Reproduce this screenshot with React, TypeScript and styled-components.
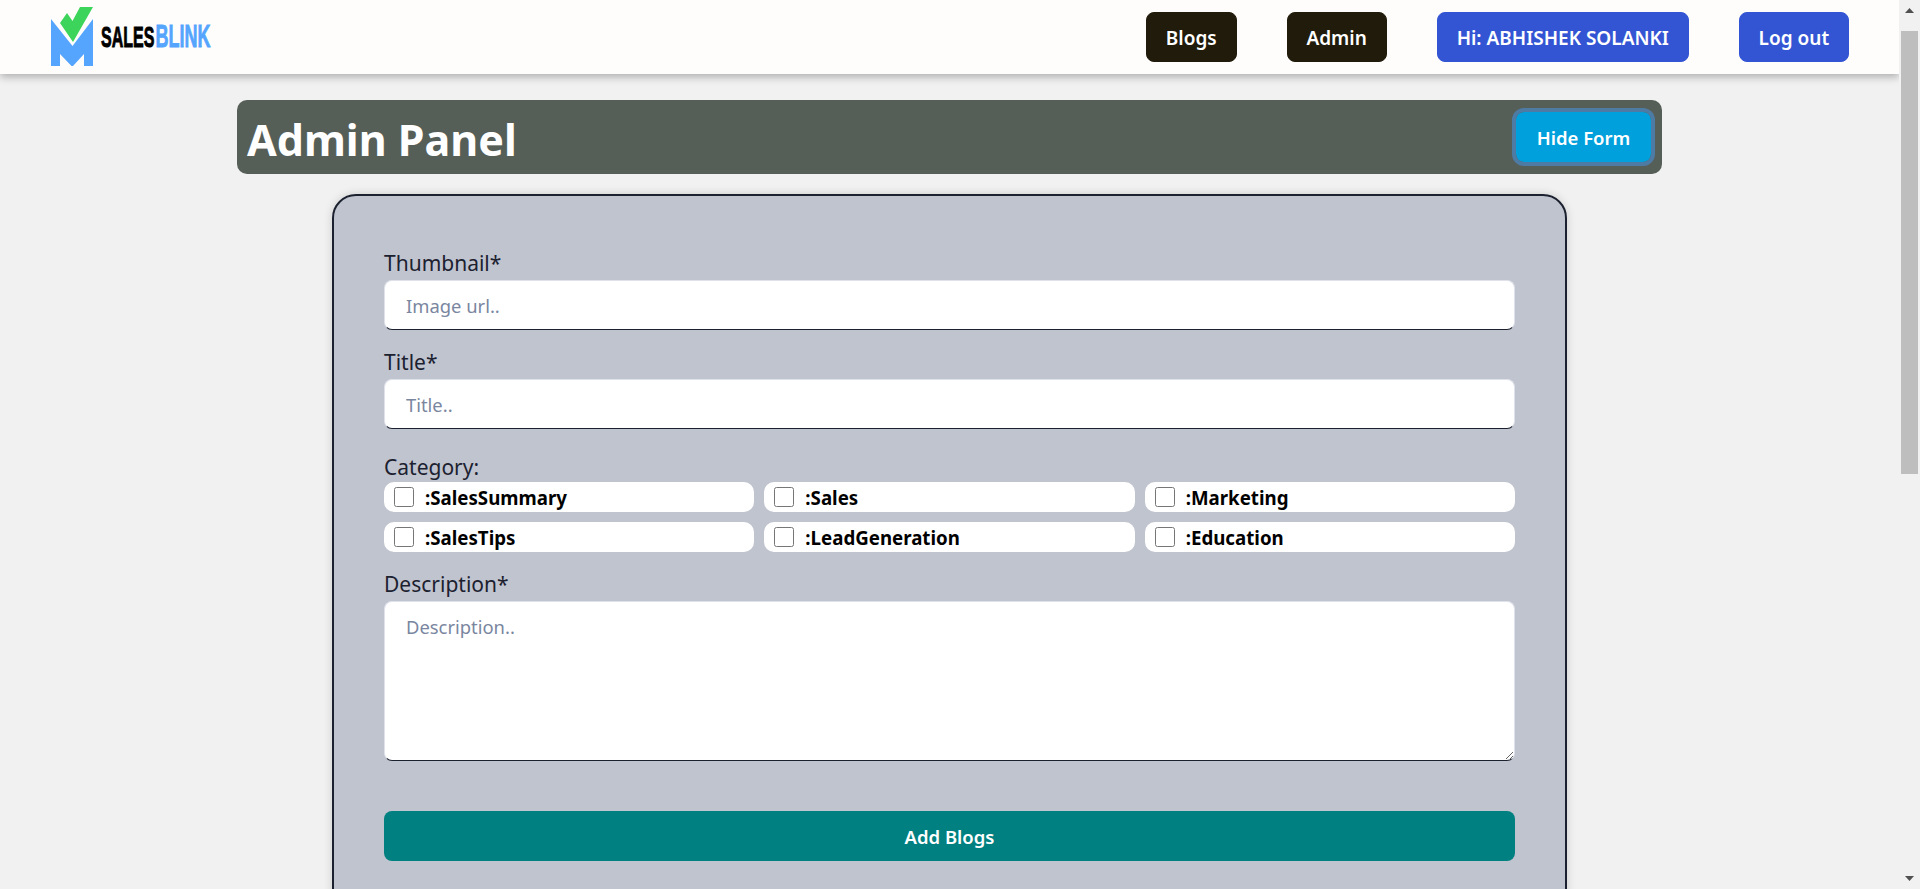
import React from "react";
import styled, { createGlobalStyle } from "styled-components";

const GlobalStyle = createGlobalStyle`
  * {
    box-sizing: border-box;
  }
  body {
    margin: 0;
    background: #f1f1f1;
    font-family: "Noto Sans", "Open Sans", sans-serif;
    color: #1c2130;
  }
`;

const Shell = styled.div`
  display: flex;
  height: 100vh;
  overflow: hidden;
`;

const Page = styled.div`
  flex: 1;
  min-width: 0;
  overflow: hidden;
`;

const ScrollRail = styled.div`
  display: flex;
  flex-direction: column;
  align-items: center;
  width: 21px;
  background: #f1f1f1;
`;

const RailArrow = styled.div`
  display: flex;
  align-items: center;
  justify-content: center;
  width: 100%;
  height: 21px;
`;

const RailThumb = styled.div`
  width: 17px;
  height: 443px;
  margin-top: 10px;
  background: #bebebe;
`;

const RailSpacer = styled.div`
  flex: 1;
`;

const Header = styled.header`
  position: relative;
  display: flex;
  align-items: center;
  justify-content: space-between;
  height: 74px;
  padding: 0 50px 0 51px;
  background: #fffdfb;
  box-shadow: 0 3px 8px rgba(0, 0, 0, 0.28);
`;

const Nav = styled.nav`
  display: flex;
  gap: 50px;
`;

const NavButton = styled.button<{ $blue?: boolean }>`
  height: 50px;
  padding: 1px 18.9px 0;
  border: 1px solid ${(props) => (props.$blue ? "#3355d4" : "#211b0b")};
  border-radius: 8px;
  background: ${(props) => (props.$blue ? "#3355d4" : "#211b0b")};
  color: #fff;
  font-family: inherit;
  font-size: 19px;
  font-weight: 600;
`;

const Main = styled.main`
  display: flex;
  flex-direction: column;
  align-items: center;
  padding-top: 26px;
`;

const TitleBar = styled.div`
  display: flex;
  align-items: center;
  justify-content: space-between;
  width: 1425px;
  height: 74px;
  padding: 0 11px 0 10px;
  border-radius: 10px;
  background: #565e58;
`;

const Title = styled.h1`
  margin: 4px 0 0;
  color: #fff;
  font-size: 43px;
  font-weight: 700;
`;

const HideButton = styled.button`
  width: 135px;
  height: 50px;
  padding: 1px 0 0;
  border: none;
  border-radius: 8px;
  outline: 4px solid #4d7ba3;
  background: #00a0dc;
  color: #fff;
  font-family: inherit;
  font-size: 18.5px;
  font-weight: 600;
`;

const FormCard = styled.form`
  display: flex;
  flex-direction: column;
  width: 1235px;
  min-height: 1000px;
  margin-top: 20px;
  padding: 52px 50px 50px;
  border: 2px solid #1c2130;
  border-radius: 24px;
  background: #c0c4cf;
  box-shadow: 0 0 10px rgba(0, 0, 0, 0.15);
`;

const Field = styled.div<{ $gap?: number }>`
  display: flex;
  flex-direction: column;
  margin-bottom: ${(props) => props.$gap ?? 0}px;
`;

const Label = styled.label<{ $tight?: boolean }>`
  margin-bottom: ${(props) => (props.$tight ? 0 : 2)}px;
  font-size: 21px;
  line-height: 30px;
`;

const TextInput = styled.input`
  width: 100%;
  height: 50px;
  padding: 0 21px;
  border: 1px solid #dfe2ea;
  border-bottom-color: #1c2130;
  border-radius: 8px;
  background: #fff;
  font-family: inherit;
  font-size: 18.4px;
  &::placeholder {
    color: #7a86a0;
  }
`;

const TextArea = styled.textarea`
  display: block;
  width: 100%;
  height: 160px;
  padding: 12px 21px;
  border: 1px solid #dfe2ea;
  border-bottom-color: #1c2130;
  border-radius: 8px;
  background: #fff;
  font-family: inherit;
  font-size: 18.4px;
  &::placeholder {
    color: #7a86a0;
  }
`;

const CategoryGrid = styled.div`
  display: grid;
  grid-template-columns: repeat(3, 1fr);
  gap: 10px;
`;

const CategoryItem = styled.label`
  display: flex;
  align-items: center;
  gap: 11px;
  height: 30px;
  padding-left: 10px;
  border-radius: 10px;
  background: #fff;
  color: #000;
  font-size: 18.7px;
  font-weight: 700;
`;

const CategoryBox = styled.input`
  width: 20px;
  height: 20px;
  margin: 0;
`;

const SubmitButton = styled.button`
  height: 50px;
  margin-top: 50px;
  padding: 1px 0 0;
  border: none;
  border-radius: 8px;
  background: #008080;
  color: #fff;
  font-family: inherit;
  font-size: 18.5px;
  font-weight: 600;
`;

const categories = [
  "SalesSummary",
  "Sales",
  "Marketing",
  "SalesTips",
  "LeadGeneration",
  "Education",
];

const LogoWord = ({
  x,
  size,
  stretch,
  fill,
  children,
}: {
  x: number;
  size: number;
  stretch: number;
  fill: string;
  children: string;
}) => (
  <text
    transform={`translate(${x} 47) scale(1 ${stretch})`}
    fontFamily="Liberation Sans, sans-serif"
    fontWeight="700"
    fontSize={size}
    fill={fill}
    stroke={fill}
    strokeWidth="0.5"
  >
    {children}
  </text>
);

const Logo = () => (
  <svg width="165" height="62" viewBox="51 6 165 62">
    <polygon
      points="51,19 72.5,46 93,19 93,66 84,66 84,54 73,66 71.5,66 60,54 60,66 51,66"
      fill="#55a5ff"
    />
    <polygon points="60,23 67,13 72.5,21 80,7 93,7 73,42" fill="#3dd45c" />
    <LogoWord x={101} size={16} stretch={1.9} fill="#000">SALES</LogoWord>
    <LogoWord x={155.5} size={18} stretch={1.7} fill="#55a5ff">BLINK</LogoWord>
  </svg>
);

const App: React.FC = () => (
  <Shell>
    <GlobalStyle />
    <Page>
      <Header>
        <Logo />
        <Nav>
          <NavButton>Blogs</NavButton>
          <NavButton>Admin</NavButton>
          <NavButton $blue>Hi: ABHISHEK SOLANKI</NavButton>
          <NavButton $blue>Log out</NavButton>
        </Nav>
      </Header>
      <Main>
        <TitleBar>
          <Title>Admin Panel</Title>
          <HideButton>Hide Form</HideButton>
        </TitleBar>
        <FormCard>
          <Field $gap={17}>
            <Label>Thumbnail*</Label>
            <TextInput placeholder="Image url.." />
          </Field>
          <Field $gap={23}>
            <Label>Title*</Label>
            <TextInput placeholder="Title.." />
          </Field>
          <Field $gap={17}>
            <Label $tight>Category:</Label>
            <CategoryGrid>
              {categories.map((name) => (
                <CategoryItem key={name}>
                  <CategoryBox type="checkbox" />
                  :{name}
                </CategoryItem>
              ))}
            </CategoryGrid>
          </Field>
          <Field>
            <Label>Description*</Label>
            <TextArea placeholder="Description.." />
          </Field>
          <SubmitButton type="button">Add Blogs</SubmitButton>
        </FormCard>
      </Main>
    </Page>
    <ScrollRail>
      <RailArrow>
        <svg width="9" height="5" viewBox="0 0 9 5">
          <polygon points="4.5,0 9,5 0,5" fill="#505050" />
        </svg>
      </RailArrow>
      <RailThumb />
      <RailSpacer />
      <RailArrow>
        <svg width="9" height="5" viewBox="0 0 9 5">
          <polygon points="0,0 9,0 4.5,5" fill="#505050" />
        </svg>
      </RailArrow>
    </ScrollRail>
  </Shell>
);

export default App;
